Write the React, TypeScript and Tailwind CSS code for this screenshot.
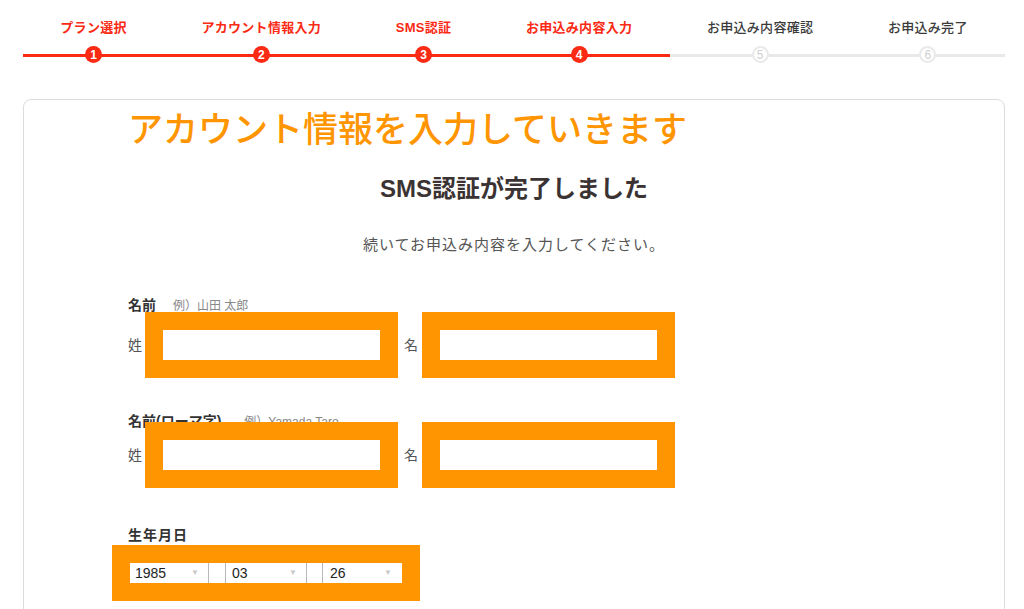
import React from 'react';

const steps = [
  { label: 'プラン選択', done: true },
  { label: 'アカウント情報入力', done: true },
  { label: 'SMS認証', done: true },
  { label: 'お申込み内容入力', done: true },
  { label: 'お申込み内容確認', done: false },
  { label: 'お申込み完了', done: false },
];

const font = { fontFamily: '"Liberation Sans", "Noto Sans CJK JP", sans-serif' };

const Stepper: React.FC = () => (
  <div className="relative ml-[23px] mr-[19px] pt-[20px]">
    {/* track */}
    <div className="absolute left-0 right-0 top-[54px] h-[3px] bg-[#e9e9e9]" />
    <div className="absolute left-0 top-[54px] h-[3px] w-[647px] bg-[#fa2a14]" />
    <div className="relative flex justify-around">
      {steps.map((s, i) => (
        <div key={s.label} className="flex flex-col items-center">
          <span
            className={`text-[13px] leading-[16px] tracking-[0.3px] whitespace-nowrap ${
              s.done ? 'font-bold text-[#fa2a14]' : 'font-medium text-[#3a3a3a]'
            }`}
          >
            {s.label}
          </span>
          {s.done ? (
            <span className="mt-[10px] flex h-[17px] w-[17px] items-center justify-center rounded-full bg-[#fa2a14] text-[12px] font-bold leading-none text-white">
              {i + 1}
            </span>
          ) : (
            <span className="mt-[10px] flex h-[17px] w-[17px] items-center justify-center rounded-full border-2 border-[#e9e9e9] bg-white text-[12px] leading-none text-[#d0d0d0]">
              {i + 1}
            </span>
          )}
        </div>
      ))}
    </div>
  </div>
);

// orange annotation frame drawn over an input
const Frame: React.FC = () => (
  <div className="pointer-events-none absolute -inset-[18px] border-[18px] border-[#ff9500]" />
);

const TextBox: React.FC = () => (
  <div className="relative">
    <input className="block h-[30px] w-[217px] bg-white outline-none" />
    <Frame />
  </div>
);

const NameRow: React.FC = () => (
  <div className="flex items-center">
    <span className="w-[14px] text-[14px] text-[#555]">姓</span>
    <div className="ml-[21px]">
      <TextBox />
    </div>
    <span className="ml-[24px] w-[14px] text-[14px] text-[#555]">名</span>
    <div className="ml-[22px]">
      <TextBox />
    </div>
  </div>
);

const Select: React.FC<{ value: string; className?: string }> = ({ value, className }) => (
  <div className={`flex h-[20px] w-[79px] items-center justify-between border-[#b8b8b8] pl-[5px] pr-[9px] ${className ?? ''}`}>
    <span className="text-[14px] text-[#222]">{value}</span>
    <span className="text-[8px] text-[#c8c8c8]">▼</span>
  </div>
);

export default function App() {
  return (
    <div className="min-h-screen bg-white text-[#333]" style={font}>
      <Stepper />

      <div className="ml-[23px] mr-[19px] mt-[36px] rounded-[8px] border border-[#dcdcdc] pb-24">
        <h1 className="mt-[10px] pl-[104px] text-[35px] leading-[40px] font-medium text-[#ff9500]">
          アカウント情報を入力していきます
        </h1>

        <h2 className="mt-[23px] text-center text-[24px] leading-[32px] font-bold text-[#3b3333]">
          SMS認証が完了しました
        </h2>
        <p className="mt-[28px] text-center text-[15px] leading-[24px] tracking-[1px] text-[#555]">
          続いてお申込み内容を入力してください。
        </p>

        <div className="mt-[38px] pl-[104px]">
          <div className="flex items-baseline leading-[20px]">
            <span className="text-[14px] font-bold text-[#333]">名前</span>
            <span className="ml-[17px] text-[12px] text-[#888]">例）山田 太郎</span>
          </div>
          <div className="mt-[14px]">
            <NameRow />
          </div>

          <div className="mt-[51px] flex items-baseline leading-[20px]">
            <span className="text-[14px] font-bold text-[#333]">名前(ローマ字)</span>
            <span className="ml-[23px] text-[12px] text-[#888]">例）Yamada Taro</span>
          </div>
          <div className="mt-[8px]">
            <NameRow />
          </div>

          <div className="mt-[55px] text-[14px] leading-[20px] font-bold tracking-[1px] text-[#333]">生年月日</div>
          <div className="relative ml-[2px] mt-[18px] flex w-[272px] bg-white">
            <Select value="1985" className="border-r" />
            <div className="w-[16px]" />
            <Select value="03" className="w-[82px] border-x pl-[6px]" />
            <div className="w-[15px]" />
            <Select value="26" className="border-l pl-[7px]" />
            <Frame />
          </div>
        </div>
      </div>
    </div>
  );
}
